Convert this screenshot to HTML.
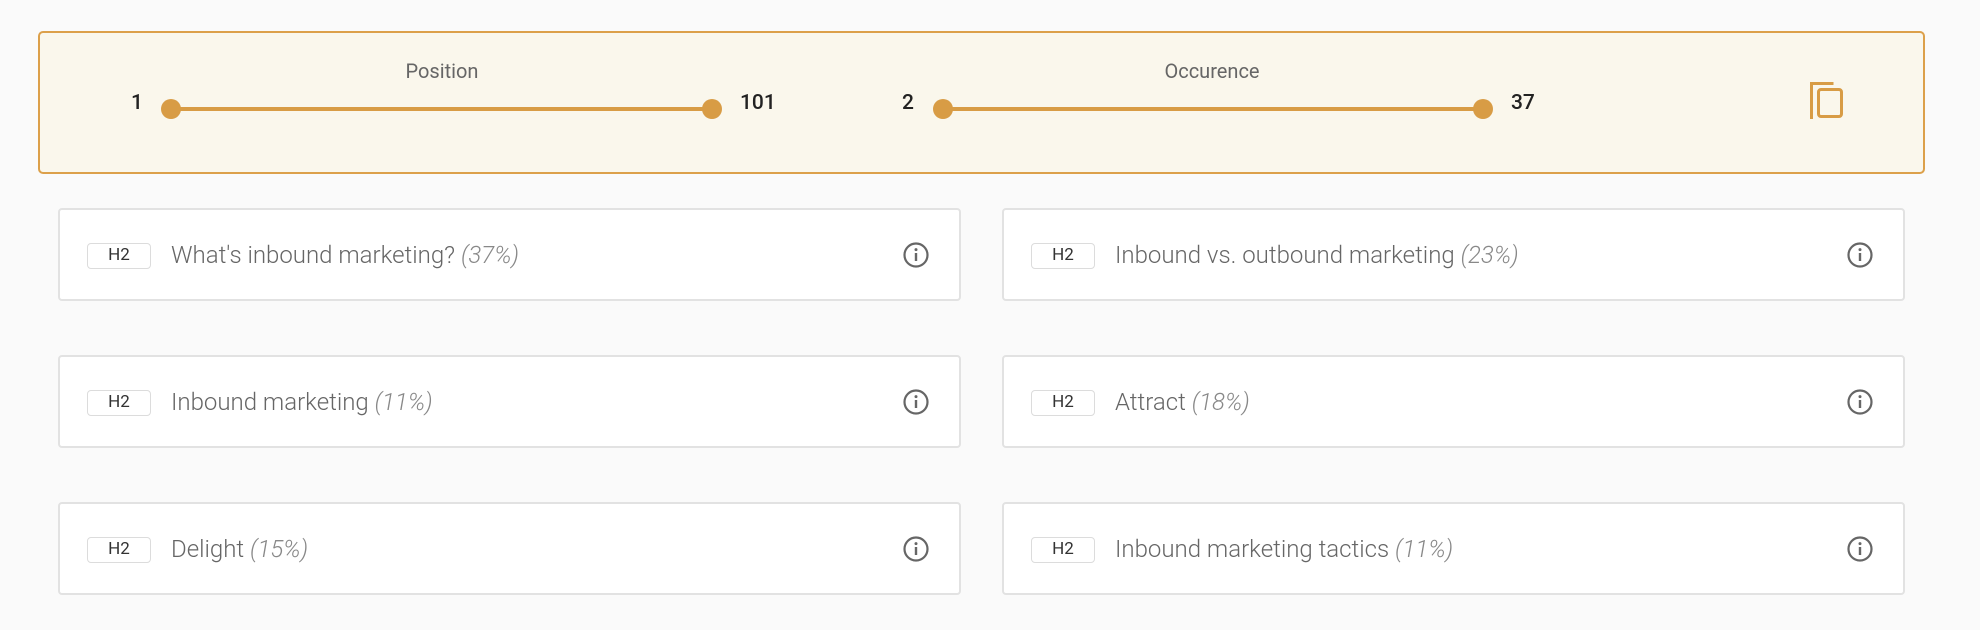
<!DOCTYPE html>
<html><head><meta charset="utf-8"><style>
*{box-sizing:border-box;margin:0;padding:0}
body{width:1980px;height:630px;background:#fafafa;font-family:"Roboto","Liberation Sans",sans-serif;position:relative;overflow:hidden}
.panel{position:absolute;left:38px;top:31px;width:1887px;height:143px;background:#faf7ec;border:2px solid #dca04a;border-radius:5px}
.abs{position:absolute}
.lbl{font-size:20px;color:#666;transform:translateX(-50%)}
.num{font-size:21px;font-weight:500;color:#222;line-height:20px}
.track{height:4px;background:#d89c45;top:107px}
.knob{width:20px;height:20px;border-radius:50%;background:#d89c45;top:99px}
.card{position:absolute;width:903px;height:93px;background:#fff;border:2px solid #e2e2e2;border-radius:4px}
.badge{position:absolute;left:27px;top:33px;width:64px;height:26px;border:1.5px solid #dcdcdc;border-radius:4px;font-size:17px;color:#333;text-align:center;line-height:23px}
.txt{position:absolute;left:111px;top:31px;font-size:24px;font-weight:300;color:#666;line-height:28px;white-space:nowrap}
.txt i{color:#888}
.info{position:absolute;left:842px;top:31px}
</style></head><body>
<div class="panel"></div>
<div class="abs lbl" style="left:442px;top:59px">Position</div>
<div class="abs num" style="left:131px;top:93px">1</div>
<div class="abs track" style="left:171px;width:541px"></div>
<div class="abs knob" style="left:161px"></div>
<div class="abs knob" style="left:702px"></div>
<div class="abs num" style="left:740px;top:93px">101</div>

<div class="abs lbl" style="left:1212px;top:59px">Occurence</div>
<div class="abs num" style="left:902px;top:93px">2</div>
<div class="abs track" style="left:943px;width:540px"></div>
<div class="abs knob" style="left:933px"></div>
<div class="abs knob" style="left:1473px"></div>
<div class="abs num" style="left:1511px;top:93px">37</div>

<svg class="abs" style="left:1805px;top:78px" width="44" height="44" viewBox="0 0 44 44">
<path d="M6.5 41 V5.5 H28.5" fill="none" stroke="#d89c45" stroke-width="3"/>
<rect x="13.5" y="11.5" width="23" height="27" rx="2.5" fill="none" stroke="#d89c45" stroke-width="3"/>
</svg>

<div class="card" style="left:58px;top:208px"><div class="badge">H2</div><div class="txt">What's inbound marketing? <i>(37%)</i></div><svg class="info" width="28" height="28" viewBox="0 0 28 28"><circle cx="14" cy="14" r="11.5" fill="none" stroke="#666" stroke-width="2.2"/><rect x="12.8" y="12" width="2.4" height="8" fill="#666"/><circle cx="14" cy="8.6" r="1.5" fill="#666"/></svg></div>
<div class="card" style="left:1002px;top:208px"><div class="badge">H2</div><div class="txt">Inbound vs. outbound marketing <i>(23%)</i></div><svg class="info" width="28" height="28" viewBox="0 0 28 28"><circle cx="14" cy="14" r="11.5" fill="none" stroke="#666" stroke-width="2.2"/><rect x="12.8" y="12" width="2.4" height="8" fill="#666"/><circle cx="14" cy="8.6" r="1.5" fill="#666"/></svg></div>

<div class="card" style="left:58px;top:355px"><div class="badge">H2</div><div class="txt">Inbound marketing <i>(11%)</i></div><svg class="info" width="28" height="28" viewBox="0 0 28 28"><circle cx="14" cy="14" r="11.5" fill="none" stroke="#666" stroke-width="2.2"/><rect x="12.8" y="12" width="2.4" height="8" fill="#666"/><circle cx="14" cy="8.6" r="1.5" fill="#666"/></svg></div>
<div class="card" style="left:1002px;top:355px"><div class="badge">H2</div><div class="txt">Attract <i>(18%)</i></div><svg class="info" width="28" height="28" viewBox="0 0 28 28"><circle cx="14" cy="14" r="11.5" fill="none" stroke="#666" stroke-width="2.2"/><rect x="12.8" y="12" width="2.4" height="8" fill="#666"/><circle cx="14" cy="8.6" r="1.5" fill="#666"/></svg></div>

<div class="card" style="left:58px;top:502px"><div class="badge">H2</div><div class="txt">Delight <i>(15%)</i></div><svg class="info" width="28" height="28" viewBox="0 0 28 28"><circle cx="14" cy="14" r="11.5" fill="none" stroke="#666" stroke-width="2.2"/><rect x="12.8" y="12" width="2.4" height="8" fill="#666"/><circle cx="14" cy="8.6" r="1.5" fill="#666"/></svg></div>
<div class="card" style="left:1002px;top:502px"><div class="badge">H2</div><div class="txt">Inbound marketing tactics <i>(11%)</i></div><svg class="info" width="28" height="28" viewBox="0 0 28 28"><circle cx="14" cy="14" r="11.5" fill="none" stroke="#666" stroke-width="2.2"/><rect x="12.8" y="12" width="2.4" height="8" fill="#666"/><circle cx="14" cy="8.6" r="1.5" fill="#666"/></svg></div>
</body></html>
